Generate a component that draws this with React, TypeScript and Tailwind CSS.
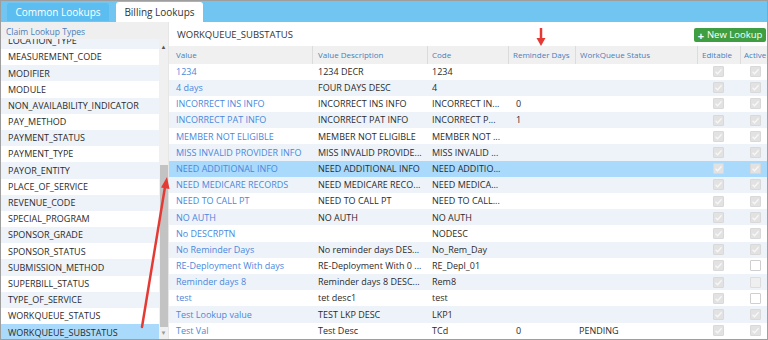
import React from "react";

type Check = "on" | "off" | "blank";

interface Row {
  value: string;
  desc: string;
  code: string;
  days?: string;
  status?: string;
  active?: Check;
}

const lookupTypes = [
  "LOCATION_TYPE",
  "MEASUREMENT_CODE",
  "MODIFIER",
  "MODULE",
  "NON_AVAILABILITY_INDICATOR",
  "PAY_METHOD",
  "PAYMENT_STATUS",
  "PAYMENT_TYPE",
  "PAYOR_ENTITY",
  "PLACE_OF_SERVICE",
  "REVENUE_CODE",
  "SPECIAL_PROGRAM",
  "SPONSOR_GRADE",
  "SPONSOR_STATUS",
  "SUBMISSION_METHOD",
  "SUPERBILL_STATUS",
  "TYPE_OF_SERVICE",
  "WORKQUEUE_STATUS",
  "WORKQUEUE_SUBSTATUS",
];

const rows: Row[] = [
  { value: "1234", desc: "1234 DECR", code: "1234" },
  { value: "4 days", desc: "FOUR DAYS DESC", code: "4" },
  { value: "INCORRECT INS INFO", desc: "INCORRECT INS INFO", code: "INCORRECT IN...", days: "0" },
  { value: "INCORRECT PAT INFO", desc: "INCORRECT PAT INFO", code: "INCORRECT P...", days: "1" },
  { value: "MEMBER NOT ELIGIBLE", desc: "MEMBER NOT ELIGIBLE", code: "MEMBER NOT ..." },
  { value: "MISS INVALID PROVIDER INFO", desc: "MISS INVALID PROVIDE...", code: "MISS INVALID ..." },
  { value: "NEED ADDITIONAL INFO", desc: "NEED ADDITIONAL INFO", code: "NEED ADDITIO..." },
  { value: "NEED MEDICARE RECORDS", desc: "NEED MEDICARE RECO...", code: "NEED MEDICA..." },
  { value: "NEED TO CALL PT", desc: "NEED TO CALL PT", code: "NEED TO CALL..." },
  { value: "NO AUTH", desc: "NO AUTH", code: "NO AUTH" },
  { value: "No DESCRPTN", desc: "", code: "NODESC" },
  { value: "No Reminder Days", desc: "No reminder days DES...", code: "No_Rem_Day" },
  { value: "RE-Deployment With days", desc: "RE-Deployment With 0 ...", code: "RE_Depl_01", active: "off" },
  { value: "Reminder days 8", desc: "Reminder days 8 DESC...", code: "Rem8", active: "blank" },
  { value: "test", desc: "tet desc1", code: "test", active: "off" },
  { value: "Test Lookup value", desc: "TEST LKP DESC", code: "LKP1" },
  { value: "Test Val", desc: "Test Desc", code: "TCd", days: "0", status: "PENDING" },
];

const Box = ({ state }: { state: Check }) => {
  if (state === "off") {
    return <div className="w-[11px] h-[11px] bg-white border border-[#cfcfcf] rounded-[1px]" />;
  }
  if (state === "blank") {
    return <div className="w-[11px] h-[11px] bg-[#efefef] border border-[#dddddd] rounded-[1px]" />;
  }
  return (
    <div className="w-[11px] h-[11px] bg-[#e2e2e2] border border-[#d9d9d9] rounded-[1px] flex items-center justify-center">
      <svg width="9" height="9" viewBox="0 0 9 9">
        <path d="M1.5 4.8 L3.6 6.8 L7.6 2.2" fill="none" stroke="#f7f7f7" strokeWidth="1.3" />
      </svg>
    </div>
  );
};

export default function App() {
  return (
    <div className="relative w-[768px] h-[340px] overflow-hidden border border-[#9e9e9e] bg-white font-['Open_Sans',sans-serif] text-[9px] text-[#2b2b2b]">
      {/* tabs */}
      <div className="flex items-end h-[21px] bg-[#70c6f0] pl-[6px] gap-[7px]">
        <div className="w-[102px] h-[18px] mb-[1px] bg-[#5bbdf0] rounded-t-[3px] text-white text-[10px] flex items-center justify-center whitespace-nowrap">
          Common Lookups
        </div>
        <div className="w-[87px] h-[20px] bg-white rounded-t-[3px] text-[#333] text-[10px] flex items-center justify-center whitespace-nowrap">
          Billing Lookups
        </div>
      </div>

      <div className="flex h-[317px]">
        {/* left panel */}
        <div className="w-[168px] shrink-0 flex flex-col border-r border-[#e6e6e6]">
          <div className="h-[17px] shrink-0 bg-[#efefef] text-[#4a7ebb] text-[8.5px] pl-[5px] pt-[3px] flex items-center">
            Claim Lookup Types
          </div>
          <div className="flex flex-1 overflow-hidden">
            <div className="w-[158px] overflow-hidden">
              <div className="-mt-[6.2px]">
                {lookupTypes.map((t, i) => (
                  <div
                    key={t}
                    className={`h-[16.2px] pl-[7px] flex items-center whitespace-nowrap ${
                      t === "WORKQUEUE_SUBSTATUS" ? "bg-[#a9dafc]" : i % 2 === 0 ? "bg-[#eef3fa]" : "bg-white"
                    }`}
                  >
                    {t}
                  </div>
                ))}
              </div>
            </div>
            <div className="w-[9px] bg-[#f0f0f0] flex flex-col items-center">
              <div className="h-[16px] flex items-center text-[#555] text-[6px]">▲</div>
              <div className="h-[110px]" />
              <div className="w-[8px] flex-1 bg-[#c3c3c3]" />
              <div className="h-[12px] flex items-center text-[#999] text-[6px]">▼</div>
            </div>
          </div>
        </div>

        {/* right panel */}
        <div className="w-[598px] shrink-0 flex flex-col">
          <div className="h-[24px] shrink-0 flex items-center justify-between pl-[8px] pr-[1px]">
            <span className="text-[9.5px] text-[#333] pt-[2px]">WORKQUEUE_SUBSTATUS</span>
            <div className="h-[14px] w-[72px] mt-[2px] bg-[#3f9e41] rounded-[2px] text-white text-[9.5px] flex items-center justify-center gap-[3px] whitespace-nowrap">
              <span className="font-bold text-[11px] leading-none">+</span>
              <span>New Lookup</span>
            </div>
          </div>

          <div className="h-[17.5px] shrink-0 bg-[#f0f0f0] text-[#4a7ebb] text-[8px] flex whitespace-nowrap">
            <div className="w-[144px] shrink-0 pl-[7px] flex items-center border-r border-[#dcdcdc]">Value</div>
            <div className="w-[115px] shrink-0 pl-[5px] flex items-center border-r border-[#dcdcdc]">Value Description</div>
            <div className="w-[81px] shrink-0 pl-[4px] flex items-center border-r border-[#dcdcdc]">Code</div>
            <div className="w-[67px] shrink-0 pl-[4px] flex items-center border-r border-[#dcdcdc]">Reminder Days</div>
            <div className="w-[122px] shrink-0 pl-[4px] flex items-center border-r border-[#dcdcdc]">WorkQueue Status</div>
            <div className="w-[43px] shrink-0 pl-[4px] flex items-center border-r border-[#dcdcdc]">Editable</div>
            <div className="w-[26px] shrink-0 pl-[3px] flex items-center">Active</div>
          </div>

          {rows.map((r, i) => (
            <div
              key={r.value}
              className={`h-[16.2px] shrink-0 flex whitespace-nowrap ${
                r.value === "NEED ADDITIONAL INFO" ? "bg-[#a9dafc]" : i % 2 === 1 ? "bg-[#eef3fa]" : "bg-white"
              }`}
            >
              <div className="w-[144px] shrink-0 pl-[7px] flex items-center text-[#4a88dc] overflow-hidden">{r.value}</div>
              <div className="w-[115px] shrink-0 pl-[5px] flex items-center overflow-hidden">{r.desc}</div>
              <div className="w-[81px] shrink-0 pl-[4px] flex items-center overflow-hidden">{r.code}</div>
              <div className="w-[67px] shrink-0 pl-[7px] flex items-center">{r.days}</div>
              <div className="w-[122px] shrink-0 pl-[3px] flex items-center">{r.status}</div>
              <div className="w-[43px] shrink-0 pl-[15px] flex items-center">
                <Box state="on" />
              </div>
              <div className="w-[26px] shrink-0 pl-[9px] flex items-center">
                <Box state={r.active ?? "on"} />
              </div>
            </div>
          ))}
        </div>
      </div>

      {/* annotation arrows */}
      <svg className="absolute left-0 top-0 pointer-events-none" width="768" height="340">
        <line x1="540" y1="27" x2="540" y2="38" stroke="#e53a34" strokeWidth="2.5" />
        <polygon points="535.5,37 544.5,37 540,45" fill="#e53a34" />
        <line x1="141" y1="326" x2="164" y2="186" stroke="#e53a34" strokeWidth="2.5" strokeLinecap="round" />
        <polygon points="160,186.5 168.5,188 166,176" fill="#e53a34" />
      </svg>
    </div>
  );
}
